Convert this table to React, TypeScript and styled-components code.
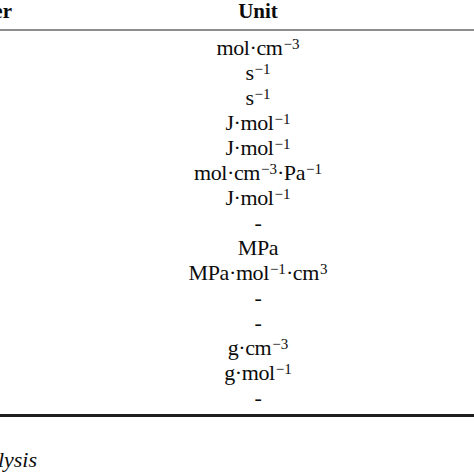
import { createGlobalStyle, styled } from 'styled-components';

type UnitPart = [string, string?];

const units: UnitPart[][] = [
  [['mol·cm', '−3']],
  [['s', '−1']],
  [['s', '−1']],
  [['J·mol', '−1']],
  [['J·mol', '−1']],
  [['mol·cm', '−3'], ['·Pa', '−1']],
  [['J·mol', '−1']],
  [['-']],
  [['MPa']],
  [['MPa·mol', '−1'], ['·cm', '3']],
  [['-']],
  [['-']],
  [['g·cm', '−3']],
  [['g·mol', '−1']],
  [['-']],
];

export default function App() {
  return (
    <>
      <GlobalStyle />
      <Page>
        <HeaderRow>
          <ParamHead>Parameter</ParamHead>
          <UnitHead>Unit</UnitHead>
        </HeaderRow>
        <HeaderRule />
        <Body>
          {units.map((parts, i) => (
            <Row key={i}>
              <ParamCell />
              <UnitCell>
                {parts.map(([base, sup], j) => (
                  <span key={j}>
                    {base}
                    {sup && <Sup>{sup}</Sup>}
                  </span>
                ))}
              </UnitCell>
            </Row>
          ))}
        </Body>
        <BottomRule />
        <Caption>
          <span>Analysis</span>
        </Caption>
      </Page>
    </>
  );
}

const GlobalStyle = createGlobalStyle`
  html, body {
    margin: 0;
    padding: 0;
    background: #ffffff;
  }
`;

const Page = styled.div`
  width: 474px;
  height: 474px;
  overflow: hidden;
  background: #ffffff;
  color: #0c0c0c;
  font-family: 'Liberation Serif', 'Times New Roman', serif;
`;

const HeaderRow = styled.div`
  display: grid;
  grid-template-columns: 12px 492px;
  height: 29px;
  padding-top: 1px;
  box-sizing: border-box;
  font-weight: bold;
  font-size: 21px;
  line-height: 20px;
`;

const ParamHead = styled.div`
  display: flex;
  justify-content: flex-end;
  white-space: nowrap;
`;

const UnitHead = styled.div`
  text-align: center;
`;

const HeaderRule = styled.div`
  height: 2px;
  background: #8e8e8e;
`;

const Body = styled.div`
  display: flex;
  flex-direction: column;
  padding-top: 4px;
`;

const Row = styled.div`
  display: grid;
  grid-template-columns: 12px 492px;
  height: 25px;
  font-size: 22px;
  line-height: 25px;
  letter-spacing: -0.4px;
`;

const ParamCell = styled.div``;

const UnitCell = styled.div`
  text-align: center;
  white-space: nowrap;
`;

const Sup = styled.sup`
  font-size: 15px;
  line-height: 0;
  vertical-align: 6px;
  margin-left: 1px;
  letter-spacing: 0;
`;

const BottomRule = styled.div`
  height: 3px;
  margin-top: 4px;
  background: #1e1e1e;
`;

const Caption = styled.div`
  display: flex;
  justify-content: flex-end;
  width: 37px;
  margin-top: 30px;
  font-style: italic;
  font-size: 22px;
  line-height: 25px;
  white-space: nowrap;
`;
